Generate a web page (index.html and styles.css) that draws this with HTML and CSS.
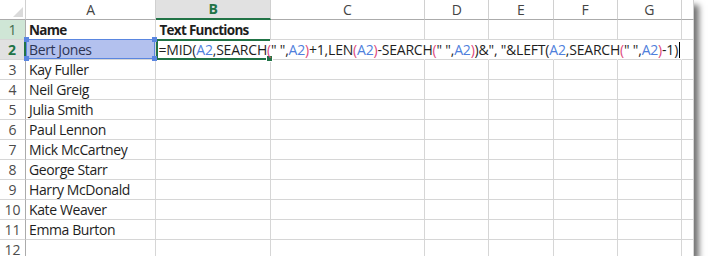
FILE: index.html
```html
<!DOCTYPE html>
<html lang="en">
<head>
    <meta charset="UTF-8">
    <title>Text Functions</title>
    <link rel="stylesheet" href="styles.css">
</head>
<body>
    <div class="sheet">
        <table class="grid">
            <thead>
                <tr>
                    <th class="corner c-rh">
                        <svg width="10" height="10" viewBox="0 0 10 10"><polygon points="10,0 10,10 0,10" fill="#dadada"/></svg>
                    </th>
                    <th class="c-a">A</th>
                    <th class="c-b col-sel">B</th>
                    <th class="c-c">C</th>
                    <th class="c-n">D</th>
                    <th class="c-n">E</th>
                    <th class="c-n">F</th>
                    <th class="c-n">G</th>
                    <th class="c-h"></th>
                </tr>
            </thead>
            <tbody>
                <tr>
                    <th class="rh rh-one">1</th>
                    <td class="bold">Name</td>
                    <td class="bold">Text Functions</td>
                    <td></td><td></td><td></td><td></td><td></td><td></td>
                </tr>
                <!-- fila en edición -->
                <tr class="edit-row">
                    <th class="rh rh-sel">2</th>
                    <td class="ref">
                        Bert Jones
                        <span class="handle h-tl"></span><span class="handle h-tr"></span>
                        <span class="handle h-bl"></span><span class="handle h-br"></span>
                    </td>
                    <td class="active"><span class="formula">=MID(<span class="r">A2</span>,SEARCH<span class="p">(</span>" ",<span class="r">A2</span><span class="p">)</span>+1,LEN<span class="p">(</span><span class="r">A2</span><span class="p">)</span>-SEARCH<span class="p">(</span>" ",<span class="r">A2</span><span class="p">)</span>)&amp;", "&amp;LEFT(<span class="r">A2</span>,SEARCH<span class="p">(</span>" ",<span class="r">A2</span><span class="p">)</span>-1)<span class="caret"></span></span></td>
                    <td></td><td></td><td></td><td></td><td></td><td></td>
                </tr>
                <tr><th class="rh">3</th><td>Kay Fuller</td><td></td><td></td><td></td><td></td><td></td><td></td><td></td></tr>
                <tr><th class="rh">4</th><td>Neil Greig</td><td></td><td></td><td></td><td></td><td></td><td></td><td></td></tr>
                <tr><th class="rh">5</th><td>Julia Smith</td><td></td><td></td><td></td><td></td><td></td><td></td><td></td></tr>
                <tr><th class="rh">6</th><td>Paul Lennon</td><td></td><td></td><td></td><td></td><td></td><td></td><td></td></tr>
                <tr><th class="rh">7</th><td>Mick McCartney</td><td></td><td></td><td></td><td></td><td></td><td></td><td></td></tr>
                <tr><th class="rh">8</th><td>George Starr</td><td></td><td></td><td></td><td></td><td></td><td></td><td></td></tr>
                <tr><th class="rh">9</th><td>Harry McDonald</td><td></td><td></td><td></td><td></td><td></td><td></td><td></td></tr>
                <tr><th class="rh">10</th><td>Kate Weaver</td><td></td><td></td><td></td><td></td><td></td><td></td><td></td></tr>
                <tr><th class="rh">11</th><td>Emma Burton</td><td></td><td></td><td></td><td></td><td></td><td></td><td></td></tr>
                <tr><th class="rh">12</th><td></td><td></td><td></td><td></td><td></td><td></td><td></td><td></td></tr>
            </tbody>
        </table>
    </div>
</body>
</html>
```

FILE: styles.css
```css
/* Estilos globales */
body {
    margin: 0;
    background-color: #fff;
    font-family: "Open Sans", "Noto Sans", sans-serif;
}

/* Hoja */
.sheet {
    width: 694px;
    height: 256px;
    overflow: hidden;
    background-color: #fff;
    box-shadow: 5px 5px 6px rgba(0, 0, 0, 0.55);
}

.grid {
    table-layout: fixed;
    width: 694px;
    border-collapse: separate;
    border-spacing: 0;
    font-size: 14px;
    color: #1e1e1e;
}

.grid th,
.grid td {
    box-sizing: border-box;
    height: 20px;
    padding: 0 3px;
    border-right: 1px solid #d6d6d6;
    border-bottom: 1px solid #d6d6d6;
    white-space: nowrap;
    vertical-align: bottom;
    line-height: 18px;
}

.grid td {
    letter-spacing: -0.4px;
}

/* Cabeceras de columna */
.grid thead th {
    font-weight: normal;
    color: #444;
    text-align: center;
    vertical-align: middle;
    border-right-color: #d0d0d0;
    border-bottom-color: #ababab;
}

.c-rh { width: 26px; }
.c-a { width: 130px; }
.c-b { width: 114px; }
.c-c { width: 154px; }
.c-n { width: 64px; }
.c-h { width: 12px; }

.corner {
    padding: 0 2px 2px 0 !important;
    text-align: right !important;
    vertical-align: bottom !important;
}

.corner svg {
    display: block;
    margin-left: auto;
}

.col-sel {
    background-color: #e1e1e1;
    color: #217346 !important;
    font-weight: bold !important;
    border-bottom: 2px solid #217346 !important;
}

/* Cabeceras de fila */
.rh {
    font-weight: normal;
    color: #4c4c4c;
    text-align: center;
    padding: 0 !important;
    border-right-color: #ababab !important;
}

.rh-one {
    background-color: #cfe6d6;
    color: #3e6b4c;
}

.rh-sel {
    background-color: #e1e1e1;
    color: #217346;
    font-weight: bold;
    border-right: 2px solid #217346 !important;
}

.grid td.bold {
    font-weight: bold;
    font-size: 13.5px;
    letter-spacing: -0.7px;
}

/* Fila en edición: sin líneas de cuadrícula bajo el texto */
.edit-row td {
    border-right-color: transparent;
}

.edit-row td:last-child {
    border-right-color: #d6d6d6;
}

.edit-row td.ref {
    border-right-color: #d6d6d6;
}

/* Celda de referencia (A2) */
.ref {
    position: relative;
    background-color: #b3c1ee;
    color: #2d3555;
}

.ref::after {
    content: "";
    position: absolute;
    left: 0;
    top: -1px;
    right: 0;
    bottom: 0;
    border: 1px solid #5a86e0;
}

.handle {
    position: absolute;
    width: 5px;
    height: 5px;
    background-color: #5a86e0;
    z-index: 1;
}

.h-tl { left: -2px; top: -3px; }
.h-tr { right: -2px; top: -3px; }
.h-bl { left: -2px; bottom: -2px; }
.h-br { right: -2px; bottom: -2px; }

/* Celda activa (B2) */
.active {
    position: relative;
    overflow: visible;
    padding-left: 2px !important;
}

.active::after {
    content: "";
    position: absolute;
    left: 0;
    top: -1px;
    right: 0;
    bottom: -1px;
    border: 2px solid #217346;
    border-right: none;
}

.active::before {
    content: "";
    position: absolute;
    right: -3px;
    bottom: -3px;
    width: 5px;
    height: 5px;
    background-color: #217346;
    border: 1px solid #fff;
    z-index: 2;
}

.formula {
    position: relative;
    z-index: 3;
    letter-spacing: -0.2px;
}

.formula .r {
    color: #4f7fdc;
}

.formula .p {
    color: #e0487c;
}

.caret {
    display: inline-block;
    width: 1px;
    height: 16px;
    margin-left: 1px;
    background-color: #000;
    vertical-align: -3px;
}
```
